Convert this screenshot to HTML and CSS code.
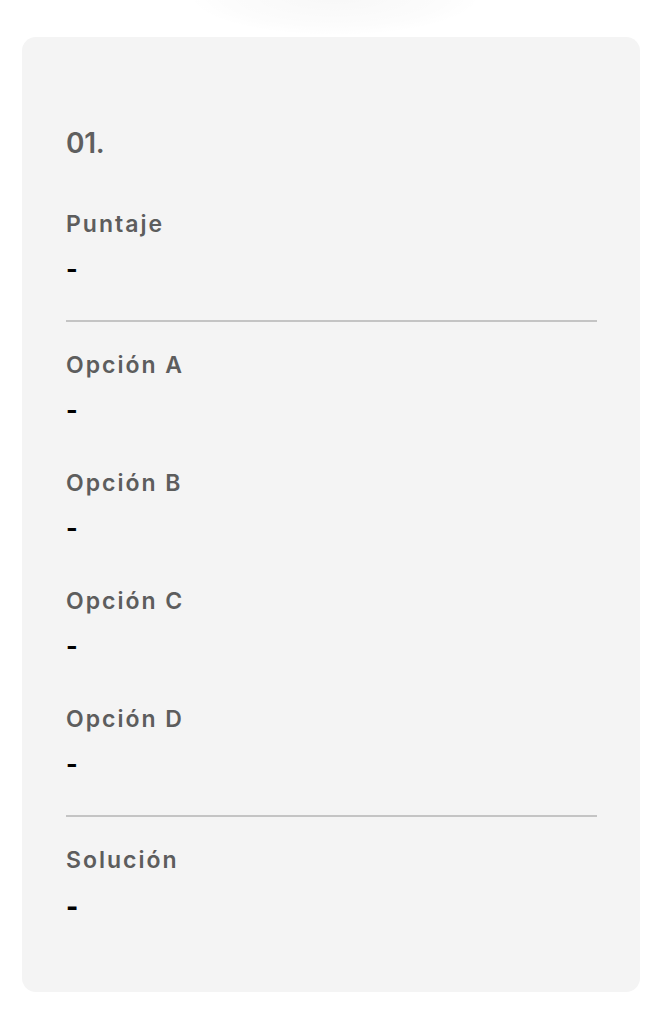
FILE: index.html
```html
<!DOCTYPE html>
<html lang="es">
<head>
<meta charset="utf-8">
<title>Pregunta 01</title>
<link rel="stylesheet" href="styles.css">
</head>
<body>
<div class="page">
  <div class="glow"></div>
  <section class="card">
    <h2 class="title">01.</h2>
    <div class="field field-first">
      <div class="label">Puntaje</div>
      <div class="value">-</div>
    </div>
    <hr class="divider">
    <div class="field field-first">
      <div class="label">Opción A</div>
      <div class="value">-</div>
    </div>
    <div class="field">
      <div class="label">Opción B</div>
      <div class="value">-</div>
    </div>
    <div class="field">
      <div class="label">Opción C</div>
      <div class="value">-</div>
    </div>
    <div class="field">
      <div class="label">Opción D</div>
      <div class="value">-</div>
    </div>
    <hr class="divider">
    <div class="field field-first">
      <div class="label">Solución</div>
      <div class="value value-strong">-</div>
    </div>
  </section>
</div>
</body>
</html>
```

FILE: styles.css
```css
html, body {
  margin: 0;
  padding: 0;
  background: #ffffff;
}

body {
  font-family: Inter, "Noto Sans", "Liberation Sans", sans-serif;
}

.page {
  position: relative;
  padding: 37px 18px 0 22px;
}

.glow {
  position: absolute;
  left: 190px;
  top: -45px;
  width: 290px;
  height: 80px;
  border-radius: 50%;
  background: radial-gradient(ellipse at center, rgba(0,0,0,0.03) 0%, rgba(0,0,0,0.012) 55%, rgba(0,0,0,0) 72%);
  pointer-events: none;
}

.card {
  background: #f4f4f4;
  border-radius: 14px;
  padding: 89px 43px 71px 44px;
}

.title {
  margin: 0 0 50px 0;
  font-size: 28px;
  line-height: 34px;
  font-weight: 600;
  color: #5f5f5f;
  letter-spacing: -0.3px;
}

.field {
  margin-top: 45px;
}

.field-first {
  margin-top: 0;
}

.divider + .field-first {
  margin-top: 29px;
}

.label {
  font-size: 23px;
  line-height: 28px;
  font-weight: 600;
  color: #5d5d5d;
  letter-spacing: 2px;
}

.value {
  margin-top: 17px;
  font-size: 25px;
  line-height: 28px;
  font-weight: 700;
  color: #000000;
}

.value-strong {
  margin-top: 19px;
  font-weight: 800;
  font-size: 26px;
}

.divider {
  margin: 37px 0 0 0;
  border: 0;
  height: 2px;
  background: #c4c4c4;
}
```
